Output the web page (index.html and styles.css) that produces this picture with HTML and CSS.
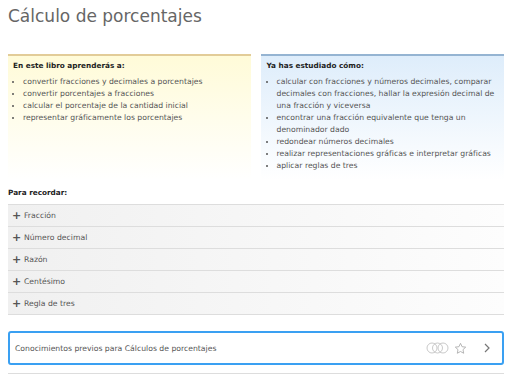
FILE: index.html
```html
<!DOCTYPE html>
<html lang="es">
<head>
  <meta charset="UTF-8">
  <title>Cálculo de porcentajes</title>
  <link rel="stylesheet" href="styles.css">
</head>
<body>
  <h1 class="title">Cálculo de porcentajes</h1>

  <div class="intro">
    <div class="box learn">
      <h3>En este libro aprenderás a:</h3>
      <ul>
        <li>convertir fracciones y decimales a porcentajes</li>
        <li>convertir porcentajes a fracciones</li>
        <li>calcular el porcentaje de la cantidad inicial</li>
        <li>representar gráficamente los porcentajes</li>
      </ul>
    </div>
    <div class="box studied">
      <h3>Ya has estudiado cómo:</h3>
      <ul>
        <li>calcular con fracciones y números decimales, comparar decimales con fracciones, hallar la expresión decimal de una fracción y viceversa</li>
        <li>encontrar una fracción equivalente que tenga un denominador dado</li>
        <li>redondear números decimales</li>
        <li>realizar representaciones gráficas e interpretar gráficas</li>
        <li>aplicar reglas de tres</li>
      </ul>
    </div>
  </div>

  <h3 class="remember">Para recordar:</h3>
  <div class="accordion">
    <div class="acc-row"><span class="plus">+</span>Fracción</div>
    <div class="acc-row"><span class="plus">+</span>Número decimal</div>
    <div class="acc-row"><span class="plus">+</span>Razón</div>
    <div class="acc-row"><span class="plus">+</span>Centésimo</div>
    <div class="acc-row"><span class="plus">+</span>Regla de tres</div>
  </div>

  <div class="prev-card">
    <span class="prev-text">Conocimientos previos para Cálculos de porcentajes</span>
    <span class="prev-icons">
      <svg class="rings" width="23" height="12" viewBox="0 0 23 12">
        <circle cx="6" cy="6" r="5" fill="none" stroke="#bbb" stroke-width="0.8"/>
        <circle cx="11.5" cy="6" r="5" fill="none" stroke="#bbb" stroke-width="0.8"/>
        <circle cx="17" cy="6" r="5" fill="none" stroke="#bbb" stroke-width="0.8"/>
      </svg>
      <svg class="star" width="13" height="13" viewBox="0 0 24 24">
        <path d="M12 2.5l2.9 6.2 6.7.8-5 4.6 1.3 6.7L12 17.5l-5.9 3.3 1.3-6.7-5-4.6 6.7-.8z" fill="none" stroke="#aaa" stroke-width="1.6" stroke-linejoin="round"/>
      </svg>
      <svg class="chev" width="8" height="10" viewBox="0 0 8 10">
        <path d="M2 1l4 4-4 4" fill="none" stroke="#777" stroke-width="1.2"/>
      </svg>
    </span>
  </div>
  <div class="bottom-line"></div>
</body>
</html>
```

FILE: styles.css
```css
body {
  margin: 0;
  padding: 0 8px;
  background: #fff;
  font-family: "DejaVu Sans", Verdana, sans-serif;
  color: #555;
  font-size: 7.7px;
}

.title {
  margin: 0;
  padding-top: 6px;
  height: 48px;
  font-size: 17px;
  font-weight: normal;
  color: #666;
}

/* Intro boxes */
.intro {
  display: flex;
  gap: 10px;
}

.box {
  flex: 1;
  box-sizing: border-box;
  height: 126px;
  padding: 4px 5px 0 5px;
}

.box h3 {
  margin: 0 0 4px;
  font-size: 7.3px;
  color: #222;
  line-height: 12px;
}

.box ul {
  margin: 0;
  padding-left: 10px;
  line-height: 12px;
}

.learn {
  border-top: 2px solid #e2cc98;
  background: linear-gradient(to bottom, #fffbd8, #fff);
}

.studied {
  padding-left: 6px;
  border-top: 2px solid #95b4d2;
  background: linear-gradient(to bottom, #deedfb, #fff);
}

/* Accordion */
.remember {
  margin: 7px 0 0;
  font-size: 7.3px;
  color: #222;
  line-height: 12px;
  height: 17px;
}

.accordion {
  border-top: 1px solid #ddd;
}

.acc-row {
  height: 21px;
  border-bottom: 1px solid #ddd;
  background: linear-gradient(to right, #f0f0f0, #fdfdfd);
  display: flex;
  align-items: center;
  padding-left: 4px;
}

.plus {
  font-size: 11px;
  font-weight: bold;
  color: #555;
  width: 12px;
}

/* Previous knowledge card */
.prev-card {
  margin-top: 16px;
  height: 30px;
  border: 2px solid #3aa0f2;
  border-radius: 3px;
  display: flex;
  align-items: center;
  justify-content: space-between;
  padding: 0 11px 0 5px;
}

.prev-icons {
  display: flex;
  align-items: center;
}

.star {
  margin-left: 5px;
}

.chev {
  margin-left: 16px;
}

.bottom-line {
  margin-top: 8px;
  border-top: 1px solid #ddd;
}
```
